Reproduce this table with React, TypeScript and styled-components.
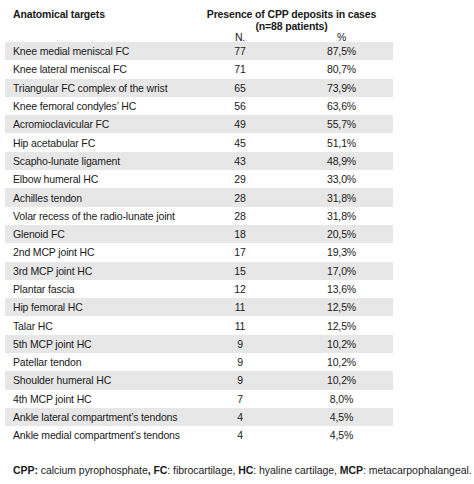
import React from "react";
import styled, { createGlobalStyle } from "styled-components";

const Global = createGlobalStyle`
  html, body { margin: 0; padding: 0; background: #ffffff; }
  body { font-family: "Liberation Sans", Arial, Helvetica, sans-serif; color: #1a1a1a; }
`;

const Page = styled.div`
  width: 474px;
  height: 484px;
  padding: 8px 0 0 5px;
  box-sizing: border-box;
  font-size: 10.5px;
  letter-spacing: -0.15px;
`;

const Table = styled.div`
  width: 388px;
  display: grid;
  grid-template-columns: 185px 100px 103px;
`;

const HeadCell = styled.div<{ $span?: number; $align?: string; $bold?: boolean; $lh?: number }>`
  grid-column: span ${(p) => p.$span ?? 1};
  text-align: ${(p) => p.$align ?? "center"};
  font-weight: ${(p) => (p.$bold ? 700 : 400)};
  line-height: ${(p) => p.$lh ?? 12}px;
  padding-left: ${(p) => (p.$align === "left" ? "8px" : "0")};
`;

const Row = styled.div<{ $shade: boolean }>`
  grid-column: 1 / -1;
  display: grid;
  grid-template-columns: subgrid;
  height: 18.3px;
  align-items: center;
  background: ${(p) => (p.$shade ? "#e7e7e7" : "#ffffff")};
`;

const Label = styled.div`
  padding-left: 8px;
  white-space: nowrap;
`;

const Num = styled.div`
  text-align: center;
`;

const Pct = styled.div`
  text-align: center;
`;

const Footer = styled.div`
  margin-top: 19px;
  padding-left: 8px;
  white-space: nowrap;
  letter-spacing: -0.05px;
`;

const B = styled.b`
  font-weight: 700;
`;

const rows: [string, string, string][] = [
  ["Knee medial meniscal FC", "77", "87,5%"],
  ["Knee lateral meniscal FC", "71", "80,7%"],
  ["Triangular FC complex of the wrist", "65", "73,9%"],
  ["Knee femoral condyles’ HC", "56", "63,6%"],
  ["Acromioclavicular FC", "49", "55,7%"],
  ["Hip acetabular FC", "45", "51,1%"],
  ["Scapho-lunate ligament", "43", "48,9%"],
  ["Elbow humeral HC", "29", "33,0%"],
  ["Achilles tendon", "28", "31,8%"],
  ["Volar recess of the radio-lunate joint", "28", "31,8%"],
  ["Glenoid FC", "18", "20,5%"],
  ["2nd MCP joint HC", "17", "19,3%"],
  ["3rd MCP joint HC", "15", "17,0%"],
  ["Plantar fascia", "12", "13,6%"],
  ["Hip femoral HC", "11", "12,5%"],
  ["Talar HC", "11", "12,5%"],
  ["5th MCP joint HC", "9", "10,2%"],
  ["Patellar tendon", "9", "10,2%"],
  ["Shoulder humeral HC", "9", "10,2%"],
  ["4th MCP joint HC", "7", "8,0%"],
  ["Ankle lateral compartment’s tendons", "4", "4,5%"],
  ["Ankle medial compartment’s tendons", "4", "4,5%"],
];

export default function App() {
  return (
    <>
      <Global />
      <Page>
        <Table>
          <HeadCell $align="left" $bold>Anatomical targets</HeadCell>
          <HeadCell $span={2} $bold>Presence of CPP deposits in cases</HeadCell>
          <HeadCell />
          <HeadCell $span={2} $bold>(n=88 patients)</HeadCell>
          <HeadCell $lh={10} />
          <HeadCell $lh={10}>N.</HeadCell>
          <HeadCell $lh={10}>%</HeadCell>
          {rows.map((r, i) => (
            <Row key={i} $shade={i % 2 === 0}>
              <Label>{r[0]}</Label>
              <Num>{r[1]}</Num>
              <Pct>{r[2]}</Pct>
            </Row>
          ))}
        </Table>
        <Footer>
          <B>CPP:</B> calcium pyrophosphate<B>, FC</B>: fibrocartilage, <B>HC</B>: hyaline cartilage, <B>MCP</B>: metacarpophalangeal.
        </Footer>
      </Page>
    </>
  );
}
